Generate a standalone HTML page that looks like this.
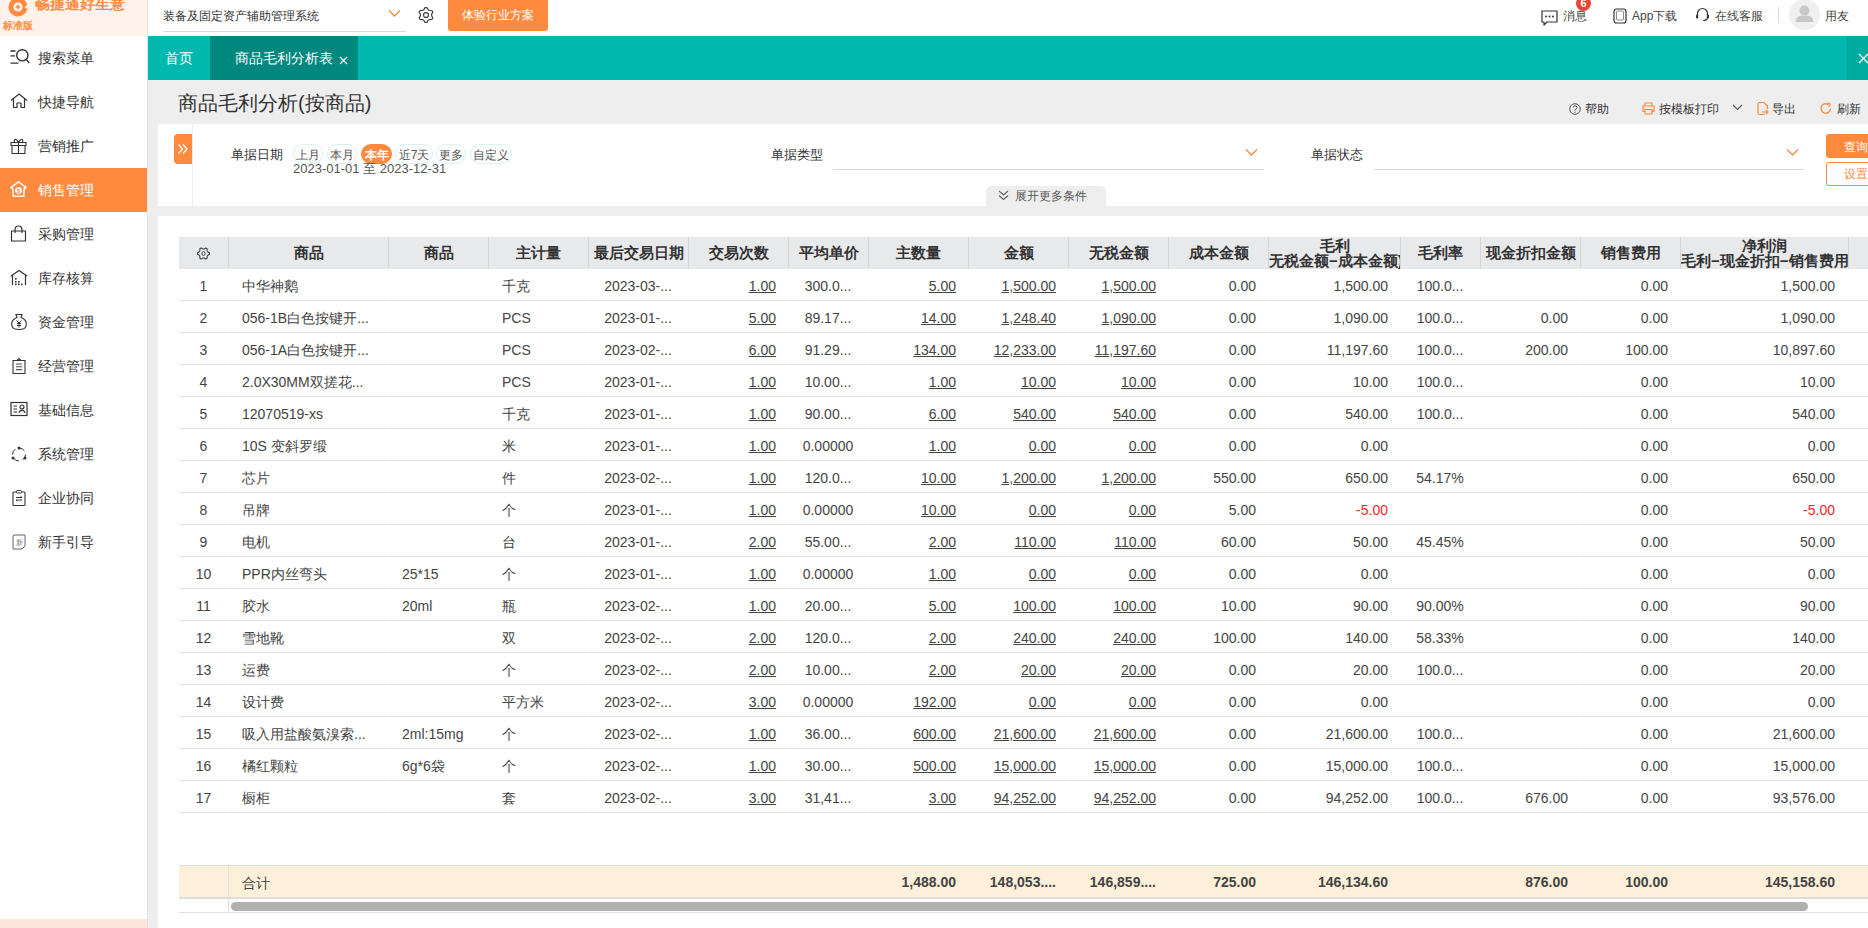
<!DOCTYPE html>
<html><head><meta charset="utf-8">
<style>
*{box-sizing:border-box;margin:0;padding:0}
html,body{width:1868px;height:928px;overflow:hidden;background:#eeeeee;font-family:"Liberation Sans",sans-serif;color:#333}
.abs{position:absolute}
#side{position:absolute;left:0;top:0;width:147px;height:928px;background:#fff;border-right:1px solid #e3e3e3;width:148px}
#logo{position:absolute;left:0;top:0;width:147px;height:36px;background:#fff2ea;overflow:hidden}
#logo .t1{position:absolute;left:35px;top:-1px;font-size:15px;font-weight:bold;color:#fd8a3e;line-height:16px;white-space:nowrap;transform:scaleY(0.8);transform-origin:0 0}
#logo .t2{position:absolute;left:3px;top:19px;font-size:10px;font-weight:bold;color:#fd8a3e;line-height:13px;white-space:nowrap}
.mi{position:absolute;left:0;width:147px;height:44px;font-size:14px;color:#333;line-height:44px}
.mi span{position:absolute;left:38px;top:0}
.mi svg{position:absolute;left:10px;top:13px}
.mi.act{background:#fd8a3e;color:#fff}
#sbot{position:absolute;left:0;top:919px;width:147px;height:9px;background:#fde7dc}
#top{position:absolute;left:148px;top:0;width:1720px;height:36px;background:#fff}
#tabs{position:absolute;left:148px;top:36px;width:1720px;height:44px;background:#01b8ae}
.tab{position:absolute;top:0;height:44px;line-height:44px;color:#fff;font-size:14px;white-space:nowrap}
#titlebar{position:absolute;left:148px;top:80px;width:1720px;height:44px;background:#eeeeee}
#filter{position:absolute;left:158px;top:124px;width:1710px;height:82px;background:#fff}
#tpanel{position:absolute;left:158px;top:216px;width:1710px;height:712px;background:#fff;overflow:hidden}
.th{position:absolute;height:32px;background:#e8e9eb;font-size:15px;font-weight:bold;color:#333;text-align:center;line-height:32px;white-space:nowrap;overflow:hidden;border-left:1px solid #d4d4d4}
.th.first{border-left:none}
.th.two{line-height:15px;padding-top:1px}
.th.two .l2{text-align:left}
.td{position:absolute;font-size:14px;color:#444;line-height:31px;white-space:nowrap;overflow:hidden;padding:0 12px 0 14px}
.td.c{text-align:center;padding:0}
.td.l{text-align:left}
.td.r{text-align:right}
.td.u span{text-decoration:underline;text-underline-offset:1px}
.td.red{color:#f5222d}
.td.b{font-weight:bold;line-height:33px}
.td.n{line-height:35px}
.rl{position:absolute;height:1px;background:#e2e2e2}
.foot{position:absolute;left:21px;width:1700px;height:34px;background:#fcf0da;border-top:1px solid #dedede;border-bottom:2px solid #dedede}
.vs{position:absolute;width:1px;background:#e0e0e0}
.chip{position:absolute;top:144px;height:20px;line-height:20px;font-size:12px;color:#555;border:1px solid #d9f1f1;border-radius:10px;text-align:center;white-space:nowrap}
.chip.on{background:#fd8a3e;border-color:#fd8a3e;color:#fff;font-weight:bold}
.lbl{position:absolute;font-size:13px;color:#333;line-height:20px;white-space:nowrap}
.uline{position:absolute;height:1px;background:#d9d9d9}
.tt{position:absolute;font-size:12px;color:#333;line-height:16px;white-space:nowrap}
</style></head><body>
<div id="side">
 <div id="logo">
  <svg class="abs" style="left:8px;top:-3px" width="20" height="20" viewBox="0 0 20 20"><path d="M10 0.5 A9.5 9.5 0 1 0 19.3 12 L16.5 10 L19.3 8 A9.5 9.5 0 0 0 10 0.5 Z" fill="#fd8a3e"/><circle cx="10" cy="10" r="4.6" fill="#fff2ea"/><path d="M10 7 L11 9 L13 10 L11 11 L10 13 L9 11 L7 10 L9 9 Z" fill="#fd8a3e"/></svg>
  <div class="t1">畅捷通好生意</div>
  <div class="t2">标准版</div>
 </div>
 <div class="mi" style="top:36px"><svg width="20" height="16" viewBox="0 0 20 16"><path d="M0.5 2H5.5M0.5 6.9H5M0.5 14.2H8.5" stroke="#333" stroke-width="1.3" fill="none"/><circle cx="12.3" cy="6.3" r="5.6" stroke="#333" stroke-width="1.4" fill="none"/><path d="M16.3 10.4 L19.3 14" stroke="#333" stroke-width="1.4"/></svg><span>搜索菜单</span></div>
 <div class="mi" style="top:80px"><svg width="18" height="16" viewBox="0 0 18 16"><path d="M1 7.5 L9 1 L17 7.5 M3.5 5.5 V14.5 H7 V10 H11 V14.5 H14.5 V5.5" stroke="#333" stroke-width="1.2" fill="none" stroke-linejoin="round"/></svg><span>快捷导航</span></div>
 <div class="mi" style="top:124px"><svg width="18" height="18" viewBox="0 0 18 18"><path d="M1 5.5 H16 V8.5 H1 Z M2 8.5 V16.5 H15 V8.5 M8.5 5.5 V16.5 M8.5 5.5 C6 1 3.5 1.5 4.5 5.5 M8.5 5.5 C11 1 13.5 1.5 12.5 5.5" stroke="#333" stroke-width="1.1" fill="none"/></svg><span>营销推广</span></div>
 <div class="mi act" style="top:168px"><svg width="18" height="18" viewBox="0 0 18 18"><path d="M8.5 0.9 L16.3 6.6 L14.2 7.3 L13.8 15.3 H3.2 L2.8 7.3 L0.7 6.6 Z" stroke="#fff" stroke-width="1.5" fill="none" stroke-linejoin="round"/><circle cx="8.5" cy="9.6" r="3.4" fill="#fff"/><text x="8.5" y="11.8" font-size="6" text-anchor="middle" fill="#fd8a3e" font-weight="bold" font-family="Liberation Sans">$</text></svg><span>销售管理</span></div>
 <div class="mi" style="top:212px"><svg width="18" height="18" viewBox="0 0 18 18"><path d="M1.5 6 H15.5 V16 H1.5 Z M5 8 V4.5 A3.5 3.5 0 0 1 12 4.5 V8" stroke="#333" stroke-width="1.2" fill="none"/></svg><span>采购管理</span></div>
 <div class="mi" style="top:256px"><svg width="18" height="18" viewBox="0 0 18 18"><path d="M1 7 L9 1.5 L17 7 M2.5 6 V16 M15.5 6 V16" stroke="#333" stroke-width="1.2" fill="none"/><g fill="#333"><rect x="5" y="9" width="1.6" height="1.6"/><rect x="5" y="12" width="1.6" height="1.6"/><rect x="8" y="12" width="1.6" height="1.6"/><rect x="5" y="14.5" width="1.6" height="1.6"/><rect x="8" y="14.5" width="1.6" height="1.6"/><rect x="11" y="14.5" width="1.6" height="1.6"/></g></svg><span>库存核算</span></div>
 <div class="mi" style="top:300px"><svg width="18" height="18" viewBox="0 0 18 18"><path d="M6 1.5 H12 L11 4.5 C15 6 17 9 16 13 C15.5 16 13 16.5 9 16.5 C5 16.5 2.5 16 2 13 C1 9 3 6 7 4.5 Z" stroke="#333" stroke-width="1.1" fill="none"/><path d="M6.5 7.5 L9 10 L11.5 7.5 M9 10 V14.5 M6.8 10.5 H11.2 M6.8 12.5 H11.2" stroke="#333" stroke-width="1" fill="none"/></svg><span>资金管理</span></div>
 <div class="mi" style="top:344px"><svg width="18" height="18" viewBox="0 0 18 18"><path d="M3 3.5 H15 V16.5 H3 Z" stroke="#333" stroke-width="1.1" fill="none" rx="1"/><path d="M7 3.5 L9 1.5 L11 3.5" stroke="#333" stroke-width="1.1" fill="none"/><path d="M6 7 H12 M6 9.8 H12 M6 12.6 H12" stroke="#555" stroke-width="1.1"/></svg><span>经营管理</span></div>
 <div class="mi" style="top:388px"><svg width="18" height="16" viewBox="0 0 18 16"><rect x="1" y="1.5" width="16" height="13" stroke="#333" stroke-width="1.2" fill="none"/><path d="M3.5 5 H7 M3.5 8 H7 M3.5 11 H7" stroke="#333" stroke-width="1.1"/><circle cx="12" cy="6" r="2" stroke="#333" stroke-width="1.1" fill="none"/><path d="M9 12 C9.5 8.5 14.5 8.5 15 12" stroke="#333" stroke-width="1.1" fill="none"/></svg><span>基础信息</span></div>
 <div class="mi" style="top:432px"><svg width="18" height="18" viewBox="0 0 18 18"><circle cx="9" cy="9.5" r="6.5" stroke="#333" stroke-width="1" fill="none" stroke-dasharray="6 4"/><circle cx="9" cy="3" r="1.5" fill="#333"/><circle cx="3" cy="13" r="1.5" fill="#333"/><circle cx="15" cy="13" r="1.5" fill="#333"/></svg><span>系统管理</span></div>
 <div class="mi" style="top:476px"><svg width="18" height="18" viewBox="0 0 18 18"><rect x="3" y="3" width="12" height="13.5" rx="1" stroke="#333" stroke-width="1.1" fill="none"/><rect x="6.5" y="1.5" width="5" height="2.5" rx="1" stroke="#333" stroke-width="1" fill="#fff"/><path d="M6 8.5 H12 L10.5 7.2 M12 11 H6 L7.5 12.3" stroke="#333" stroke-width="1" fill="none"/></svg><span>企业协同</span></div>
 <div class="mi" style="top:520px"><svg width="18" height="18" viewBox="0 0 18 18"><path d="M4 2 H15 V13 L12 16 H3 V3 Z" stroke="#666" stroke-width="1" fill="none"/><text x="9" y="12" font-size="7" text-anchor="middle" fill="#777">新</text></svg><span>新手引导</span></div>
 <div id="sbot"></div>
</div>

<div id="top">
 <div class="tt" style="left:15px;top:8px;font-size:12px">装备及固定资产辅助管理系统</div>
 <div class="uline" style="left:15px;top:31px;width:243px;background:#d9d9d9"></div>
 <svg class="abs" style="left:240px;top:9px" width="13" height="9" viewBox="0 0 13 9"><path d="M1 1.5 L6.5 7 L12 1.5" stroke="#fd8a3e" stroke-width="1.3" fill="none"/></svg>
 <svg class="abs" style="left:270px;top:7px" width="16" height="16" viewBox="0 0 13 13"><path d="M12.45 5.72 L12.45 7.28 L10.75 8.26 L10.15 9.30 L10.15 11.26 L8.80 12.04 L7.10 11.06 L5.90 11.06 L4.20 12.04 L2.85 11.26 L2.85 9.30 L2.25 8.26 L0.55 7.28 L0.55 5.72 L2.25 4.74 L2.85 3.70 L2.85 1.74 L4.20 0.96 L5.90 1.94 L7.10 1.94 L8.80 0.96 L10.15 1.74 L10.15 3.70 L10.75 4.74 Z" fill="none" stroke="#444" stroke-width="1" stroke-linejoin="round" transform="rotate(90 6.5 6.5)"/><circle cx="6.5" cy="6.5" r="2" fill="none" stroke="#444" stroke-width="1"/></svg>
 <div class="abs" style="left:300px;top:0;width:100px;height:31px;background:#fd8a3e;border-radius:0 0 3px 3px;color:#fff;font-size:12px;line-height:31px;text-align:center">体验行业方案</div>

 <svg class="abs" style="left:1393px;top:10px" width="17" height="16" viewBox="0 0 17 16"><path d="M1 1 H16 V12 H6 L3 15 V12 H1 Z" stroke="#333" stroke-width="1.2" fill="none" stroke-linejoin="round"/><circle cx="5" cy="6.5" r="1" fill="#333"/><circle cx="8.5" cy="6.5" r="1" fill="#333"/><circle cx="12" cy="6.5" r="1" fill="#333"/></svg>
 <div class="tt" style="left:1415px;top:8px;color:#444">消息</div>
 <div class="abs" style="left:1428px;top:-4px;width:15px;height:15px;border-radius:50%;background:#f04134;color:#fff;font-size:11px;font-weight:bold;text-align:center;line-height:15px">6</div>
 <svg class="abs" style="left:1465px;top:8px" width="14" height="16" viewBox="0 0 14 16"><rect x="1" y="1" width="12" height="14" rx="2.5" stroke="#333" stroke-width="1.2" fill="none"/><rect x="3.5" y="3" width="7" height="9" rx="1" stroke="#888" stroke-width="1" fill="none"/></svg>
 <div class="tt" style="left:1484px;top:8px;color:#444">App下载</div>
 <svg class="abs" style="left:1547px;top:7px" width="15" height="15" viewBox="0 0 15 15"><path d="M2.5 8 V6.5 A5 5 0 0 1 12.5 6.5 V8" stroke="#333" stroke-width="1.2" fill="none"/><rect x="1" y="7.5" width="2.2" height="4" rx="1" fill="#333"/><rect x="11.8" y="7.5" width="2.2" height="4" rx="1" fill="#333"/><path d="M12.5 11 C12 13 10 13.5 8 13.5" stroke="#333" stroke-width="1.1" fill="none"/></svg>
 <div class="tt" style="left:1567px;top:8px;color:#444">在线客服</div>
 <div class="abs" style="left:1630px;top:7px;width:1px;height:16px;background:#ddd"></div>
 <div class="abs" style="left:1641px;top:-1px;width:31px;height:31px;border-radius:50%;background:#efefef;overflow:hidden"><svg width="31" height="31" viewBox="0 0 31 31"><circle cx="15.5" cy="11.5" r="5" fill="#c8c8c8"/><path d="M6.5 23 C7 17.5 10 16.5 15.5 16.5 C21 16.5 24 17.5 24.5 23 Z" fill="#c8c8c8"/></svg></div>
 <div class="tt" style="left:1677px;top:8px;color:#444">用友</div>
</div>

<div id="tabs">
 <div class="tab" style="left:17px">首页</div>
 <div class="abs" style="left:62px;top:0;width:148px;height:44px;background:#00877e"></div>
 <div class="tab" style="left:87px">商品毛利分析表</div>
 <svg class="abs" style="left:191px;top:20px" width="9" height="9" viewBox="0 0 9 9"><path d="M1 1 L8 8 M8 1 L1 8" stroke="#fff" stroke-width="1.2"/></svg>
 <div class="abs" style="left:1699px;top:0;width:21px;height:44px;background:#00aca0;border-left:1px solid #009d92"></div>
 <svg class="abs" style="left:1710px;top:17px" width="11" height="11" viewBox="0 0 11 11"><path d="M1 1 L10 10 M10 1 L1 10" stroke="#fff" stroke-width="1.3"/></svg>
</div>

<div id="titlebar">
 <div class="abs" style="left:30px;top:12px;font-size:20px;line-height:22px;color:#333;white-space:nowrap">商品毛利分析(按商品)</div>
 <svg class="abs" style="left:1421px;top:23px" width="12" height="12" viewBox="0 0 12 12"><circle cx="6" cy="6" r="5.3" stroke="#555" stroke-width="1" fill="none"/><path d="M4.3 4.6 A1.8 1.8 0 1 1 6.5 6.3 C6 6.5 6 7 6 7.6" stroke="#555" stroke-width="1" fill="none"/><circle cx="6" cy="9.2" r="0.6" fill="#555"/></svg>
 <div class="tt" style="left:1437px;top:21px">帮助</div>
 <svg class="abs" style="left:1494px;top:22px" width="13" height="13" viewBox="0 0 13 13"><path d="M3 4 V1 H10 V4 M3 9.5 H1 V4 H12 V9.5 H10 M3 7.5 H10 V12 H3 Z" stroke="#fd8a3e" stroke-width="1.2" fill="none"/></svg>
 <div class="tt" style="left:1511px;top:21px">按模板打印</div>
 <svg class="abs" style="left:1584px;top:24px" width="11" height="7" viewBox="0 0 11 7"><path d="M1 1 L5.5 5.5 L10 1" stroke="#555" stroke-width="1.1" fill="none"/></svg>
 <svg class="abs" style="left:1609px;top:21px" width="12" height="15" viewBox="0 0 12 15"><path d="M8 13.5 H2.5 A1.5 1.5 0 0 1 1 12 V3 A1.5 1.5 0 0 1 2.5 1.5 H7 L10.5 5 V8" stroke="#fd8a3e" stroke-width="1.2" fill="none"/><path d="M5 11 H11 M9 9 L11 11 L9 13" stroke="#fd8a3e" stroke-width="1.1" fill="none"/></svg>
 <div class="tt" style="left:1624px;top:21px">导出</div>
 <svg class="abs" style="left:1672px;top:22px" width="12" height="13" viewBox="0 0 12 13"><path d="M10.5 6.5 A4.7 4.7 0 1 1 8.5 2.6" stroke="#fd8a3e" stroke-width="1.3" fill="none"/><path d="M7 0.8 L10.2 2 L8.8 5" stroke="#fd8a3e" stroke-width="1.2" fill="none"/></svg>
 <div class="tt" style="left:1689px;top:21px">刷新</div>
</div>

<div id="filter">
 <div class="abs" style="left:34px;top:0;width:1px;height:82px;background:#eeeeee"></div>
 <div class="abs" style="left:16px;top:10px;width:18px;height:30px;background:#fd8a3e;border-radius:4px 0 0 4px"></div>
 <svg class="abs" style="left:19px;top:19px" width="12" height="12" viewBox="0 0 12 12"><path d="M1.5 1.5 L5.5 6 L1.5 10.5 M6 1.5 L10 6 L6 10.5" stroke="#fff" stroke-width="1.3" fill="none"/></svg>
 <div class="lbl" style="left:73px;top:21px">单据日期</div>
</div>
<div class="chip" style="left:293px;width:30px">上月</div>
<div class="chip" style="left:327px;width:30px">本月</div>
<div class="chip on" style="left:361px;width:31px">本年</div>
<div class="chip" style="left:395px;width:38px">近7天</div>
<div class="chip" style="left:436px;width:30px">更多</div>
<div class="chip" style="left:470px;width:42px">自定义</div>
<div class="abs" style="left:293px;top:161px;font-size:13px;line-height:16px;color:#555;white-space:nowrap">2023-01-01 至 2023-12-31</div>
<div class="lbl" style="left:771px;top:145px">单据类型</div>
<div class="uline" style="left:833px;top:169px;width:431px"></div>
<svg class="abs" style="left:1245px;top:148px" width="13" height="9" viewBox="0 0 13 9"><path d="M1 1.5 L6.5 7 L12 1.5" stroke="#fd8a3e" stroke-width="1.3" fill="none"/></svg>
<div class="lbl" style="left:1311px;top:145px">单据状态</div>
<div class="uline" style="left:1374px;top:169px;width:430px"></div>
<svg class="abs" style="left:1786px;top:148px" width="13" height="9" viewBox="0 0 13 9"><path d="M1 1.5 L6.5 7 L12 1.5" stroke="#fd8a3e" stroke-width="1.3" fill="none"/></svg>
<div class="abs" style="left:1826px;top:134px;width:60px;height:24px;background:#fd8a3e;border-radius:3px;color:#fff;font-size:12px;line-height:26px;padding-left:18px">查询</div>
<div class="abs" style="left:1826px;top:162px;width:60px;height:24px;background:#fff;border:1px solid #fd8a3e;border-radius:3px;color:#fd8a3e;font-size:12px;line-height:22px;padding-left:17px">设置</div>
<div class="abs" style="left:986px;top:186px;width:120px;height:20px;background:#eeeeee;border-radius:5px 5px 0 0"></div>
<svg class="abs" style="left:998px;top:190px" width="11" height="11" viewBox="0 0 11 11"><path d="M1 1 L5.5 5 L10 1 M1 5.5 L5.5 9.5 L10 5.5" stroke="#666" stroke-width="1.1" fill="none"/></svg>
<div class="abs" style="left:1015px;top:188px;font-size:12px;line-height:16px;color:#555;white-space:nowrap">展开更多条件</div>

<div id="tpanel">
<div class="th first" style="left:21px;top:21px;width:49px"><svg width="13" height="13" viewBox="0 0 13 13" style="position:absolute;left:18px;top:10px"><path d="M12.45 5.72 L12.45 7.28 L10.75 8.26 L10.15 9.30 L10.15 11.26 L8.80 12.04 L7.10 11.06 L5.90 11.06 L4.20 12.04 L2.85 11.26 L2.85 9.30 L2.25 8.26 L0.55 7.28 L0.55 5.72 L2.25 4.74 L2.85 3.70 L2.85 1.74 L4.20 0.96 L5.90 1.94 L7.10 1.94 L8.80 0.96 L10.15 1.74 L10.15 3.70 L10.75 4.74 Z" fill="none" stroke="#444" stroke-width="1.1" stroke-linejoin="round"/><ellipse cx="6.5" cy="6.5" rx="1.6" ry="2" fill="none" stroke="#444" stroke-width="1"/></svg></div>
<div class="th" style="left:70px;top:21px;width:160px"><span>商品</span></div>
<div class="th" style="left:230px;top:21px;width:100px"><span>商品</span></div>
<div class="th" style="left:330px;top:21px;width:100px"><span>主计量</span></div>
<div class="th" style="left:430px;top:21px;width:100px"><span>最后交易日期</span></div>
<div class="th" style="left:530px;top:21px;width:100px"><span>交易次数</span></div>
<div class="th" style="left:630px;top:21px;width:80px"><span>平均单价</span></div>
<div class="th" style="left:710px;top:21px;width:100px"><span>主数量</span></div>
<div class="th" style="left:810px;top:21px;width:100px"><span>金额</span></div>
<div class="th" style="left:910px;top:21px;width:100px"><span>无税金额</span></div>
<div class="th" style="left:1010px;top:21px;width:100px"><span>成本金额</span></div>
<div class="th two" style="left:1110px;top:21px;width:132px"><div>毛利</div><div class="l2">无税金额−成本金额)</div></div>
<div class="th" style="left:1242px;top:21px;width:80px"><span>毛利率</span></div>
<div class="th" style="left:1322px;top:21px;width:100px"><span>现金折扣金额</span></div>
<div class="th" style="left:1422px;top:21px;width:100px"><span>销售费用</span></div>
<div class="th two" style="left:1522px;top:21px;width:168px"><div>净利润</div><div class="l2">毛利−现金折扣−销售费用</div></div>
<div class="th" style="left:1690px;top:21px;width:40px"><span></span></div>
<div class="td c " style="left:21px;top:55px;width:49px;height:29px"><span>1</span></div>
<div class="td l " style="left:70px;top:55px;width:160px;height:29px"><span>中华神鹅</span></div>
<div class="td l " style="left:230px;top:55px;width:100px;height:29px"><span></span></div>
<div class="td l " style="left:330px;top:55px;width:100px;height:29px"><span>千克</span></div>
<div class="td c " style="left:430px;top:55px;width:100px;height:29px"><span>2023-03-...</span></div>
<div class="td r u " style="left:530px;top:55px;width:100px;height:29px"><span>1.00</span></div>
<div class="td c " style="left:630px;top:55px;width:80px;height:29px"><span>300.0...</span></div>
<div class="td r u " style="left:710px;top:55px;width:100px;height:29px"><span>5.00</span></div>
<div class="td r u " style="left:810px;top:55px;width:100px;height:29px"><span>1,500.00</span></div>
<div class="td r u " style="left:910px;top:55px;width:100px;height:29px"><span>1,500.00</span></div>
<div class="td r " style="left:1010px;top:55px;width:100px;height:29px"><span>0.00</span></div>
<div class="td r " style="left:1110px;top:55px;width:132px;height:29px"><span>1,500.00</span></div>
<div class="td c " style="left:1242px;top:55px;width:80px;height:29px"><span>100.0...</span></div>
<div class="td r " style="left:1322px;top:55px;width:100px;height:29px"><span></span></div>
<div class="td r " style="left:1422px;top:55px;width:100px;height:29px"><span>0.00</span></div>
<div class="td r " style="left:1522px;top:55px;width:168px;height:29px;padding-right:13px"><span>1,500.00</span></div>
<div class="td l " style="left:1690px;top:55px;width:40px;height:29px"><span></span></div>
<div class="rl" style="top:84px;left:22px;width:1700px;background:#efefef"></div>
<div class="rl" style="top:84px;left:23px;width:47px"></div>
<div class="rl" style="top:84px;left:72px;width:158px"></div>
<div class="rl" style="top:84px;left:232px;width:98px"></div>
<div class="rl" style="top:84px;left:332px;width:98px"></div>
<div class="rl" style="top:84px;left:432px;width:98px"></div>
<div class="rl" style="top:84px;left:532px;width:98px"></div>
<div class="rl" style="top:84px;left:632px;width:78px"></div>
<div class="rl" style="top:84px;left:712px;width:98px"></div>
<div class="rl" style="top:84px;left:812px;width:98px"></div>
<div class="rl" style="top:84px;left:912px;width:98px"></div>
<div class="rl" style="top:84px;left:1012px;width:98px"></div>
<div class="rl" style="top:84px;left:1112px;width:130px"></div>
<div class="rl" style="top:84px;left:1244px;width:78px"></div>
<div class="rl" style="top:84px;left:1324px;width:98px"></div>
<div class="rl" style="top:84px;left:1424px;width:98px"></div>
<div class="rl" style="top:84px;left:1524px;width:166px"></div>
<div class="rl" style="top:84px;left:1692px;width:38px"></div>
<div class="td c " style="left:21px;top:87px;width:49px;height:29px"><span>2</span></div>
<div class="td l " style="left:70px;top:87px;width:160px;height:29px"><span>056-1B白色按键开...</span></div>
<div class="td l " style="left:230px;top:87px;width:100px;height:29px"><span></span></div>
<div class="td l " style="left:330px;top:87px;width:100px;height:29px"><span>PCS</span></div>
<div class="td c " style="left:430px;top:87px;width:100px;height:29px"><span>2023-01-...</span></div>
<div class="td r u " style="left:530px;top:87px;width:100px;height:29px"><span>5.00</span></div>
<div class="td c " style="left:630px;top:87px;width:80px;height:29px"><span>89.17...</span></div>
<div class="td r u " style="left:710px;top:87px;width:100px;height:29px"><span>14.00</span></div>
<div class="td r u " style="left:810px;top:87px;width:100px;height:29px"><span>1,248.40</span></div>
<div class="td r u " style="left:910px;top:87px;width:100px;height:29px"><span>1,090.00</span></div>
<div class="td r " style="left:1010px;top:87px;width:100px;height:29px"><span>0.00</span></div>
<div class="td r " style="left:1110px;top:87px;width:132px;height:29px"><span>1,090.00</span></div>
<div class="td c " style="left:1242px;top:87px;width:80px;height:29px"><span>100.0...</span></div>
<div class="td r " style="left:1322px;top:87px;width:100px;height:29px"><span>0.00</span></div>
<div class="td r " style="left:1422px;top:87px;width:100px;height:29px"><span>0.00</span></div>
<div class="td r " style="left:1522px;top:87px;width:168px;height:29px;padding-right:13px"><span>1,090.00</span></div>
<div class="td l " style="left:1690px;top:87px;width:40px;height:29px"><span></span></div>
<div class="rl" style="top:116px;left:22px;width:1700px;background:#efefef"></div>
<div class="rl" style="top:116px;left:23px;width:47px"></div>
<div class="rl" style="top:116px;left:72px;width:158px"></div>
<div class="rl" style="top:116px;left:232px;width:98px"></div>
<div class="rl" style="top:116px;left:332px;width:98px"></div>
<div class="rl" style="top:116px;left:432px;width:98px"></div>
<div class="rl" style="top:116px;left:532px;width:98px"></div>
<div class="rl" style="top:116px;left:632px;width:78px"></div>
<div class="rl" style="top:116px;left:712px;width:98px"></div>
<div class="rl" style="top:116px;left:812px;width:98px"></div>
<div class="rl" style="top:116px;left:912px;width:98px"></div>
<div class="rl" style="top:116px;left:1012px;width:98px"></div>
<div class="rl" style="top:116px;left:1112px;width:130px"></div>
<div class="rl" style="top:116px;left:1244px;width:78px"></div>
<div class="rl" style="top:116px;left:1324px;width:98px"></div>
<div class="rl" style="top:116px;left:1424px;width:98px"></div>
<div class="rl" style="top:116px;left:1524px;width:166px"></div>
<div class="rl" style="top:116px;left:1692px;width:38px"></div>
<div class="td c " style="left:21px;top:119px;width:49px;height:29px"><span>3</span></div>
<div class="td l " style="left:70px;top:119px;width:160px;height:29px"><span>056-1A白色按键开...</span></div>
<div class="td l " style="left:230px;top:119px;width:100px;height:29px"><span></span></div>
<div class="td l " style="left:330px;top:119px;width:100px;height:29px"><span>PCS</span></div>
<div class="td c " style="left:430px;top:119px;width:100px;height:29px"><span>2023-02-...</span></div>
<div class="td r u " style="left:530px;top:119px;width:100px;height:29px"><span>6.00</span></div>
<div class="td c " style="left:630px;top:119px;width:80px;height:29px"><span>91.29...</span></div>
<div class="td r u " style="left:710px;top:119px;width:100px;height:29px"><span>134.00</span></div>
<div class="td r u " style="left:810px;top:119px;width:100px;height:29px"><span>12,233.00</span></div>
<div class="td r u " style="left:910px;top:119px;width:100px;height:29px"><span>11,197.60</span></div>
<div class="td r " style="left:1010px;top:119px;width:100px;height:29px"><span>0.00</span></div>
<div class="td r " style="left:1110px;top:119px;width:132px;height:29px"><span>11,197.60</span></div>
<div class="td c " style="left:1242px;top:119px;width:80px;height:29px"><span>100.0...</span></div>
<div class="td r " style="left:1322px;top:119px;width:100px;height:29px"><span>200.00</span></div>
<div class="td r " style="left:1422px;top:119px;width:100px;height:29px"><span>100.00</span></div>
<div class="td r " style="left:1522px;top:119px;width:168px;height:29px;padding-right:13px"><span>10,897.60</span></div>
<div class="td l " style="left:1690px;top:119px;width:40px;height:29px"><span></span></div>
<div class="rl" style="top:148px;left:22px;width:1700px;background:#efefef"></div>
<div class="rl" style="top:148px;left:23px;width:47px"></div>
<div class="rl" style="top:148px;left:72px;width:158px"></div>
<div class="rl" style="top:148px;left:232px;width:98px"></div>
<div class="rl" style="top:148px;left:332px;width:98px"></div>
<div class="rl" style="top:148px;left:432px;width:98px"></div>
<div class="rl" style="top:148px;left:532px;width:98px"></div>
<div class="rl" style="top:148px;left:632px;width:78px"></div>
<div class="rl" style="top:148px;left:712px;width:98px"></div>
<div class="rl" style="top:148px;left:812px;width:98px"></div>
<div class="rl" style="top:148px;left:912px;width:98px"></div>
<div class="rl" style="top:148px;left:1012px;width:98px"></div>
<div class="rl" style="top:148px;left:1112px;width:130px"></div>
<div class="rl" style="top:148px;left:1244px;width:78px"></div>
<div class="rl" style="top:148px;left:1324px;width:98px"></div>
<div class="rl" style="top:148px;left:1424px;width:98px"></div>
<div class="rl" style="top:148px;left:1524px;width:166px"></div>
<div class="rl" style="top:148px;left:1692px;width:38px"></div>
<div class="td c " style="left:21px;top:151px;width:49px;height:29px"><span>4</span></div>
<div class="td l " style="left:70px;top:151px;width:160px;height:29px"><span>2.0X30MM双搓花...</span></div>
<div class="td l " style="left:230px;top:151px;width:100px;height:29px"><span></span></div>
<div class="td l " style="left:330px;top:151px;width:100px;height:29px"><span>PCS</span></div>
<div class="td c " style="left:430px;top:151px;width:100px;height:29px"><span>2023-01-...</span></div>
<div class="td r u " style="left:530px;top:151px;width:100px;height:29px"><span>1.00</span></div>
<div class="td c " style="left:630px;top:151px;width:80px;height:29px"><span>10.00...</span></div>
<div class="td r u " style="left:710px;top:151px;width:100px;height:29px"><span>1.00</span></div>
<div class="td r u " style="left:810px;top:151px;width:100px;height:29px"><span>10.00</span></div>
<div class="td r u " style="left:910px;top:151px;width:100px;height:29px"><span>10.00</span></div>
<div class="td r " style="left:1010px;top:151px;width:100px;height:29px"><span>0.00</span></div>
<div class="td r " style="left:1110px;top:151px;width:132px;height:29px"><span>10.00</span></div>
<div class="td c " style="left:1242px;top:151px;width:80px;height:29px"><span>100.0...</span></div>
<div class="td r " style="left:1322px;top:151px;width:100px;height:29px"><span></span></div>
<div class="td r " style="left:1422px;top:151px;width:100px;height:29px"><span>0.00</span></div>
<div class="td r " style="left:1522px;top:151px;width:168px;height:29px;padding-right:13px"><span>10.00</span></div>
<div class="td l " style="left:1690px;top:151px;width:40px;height:29px"><span></span></div>
<div class="rl" style="top:180px;left:22px;width:1700px;background:#efefef"></div>
<div class="rl" style="top:180px;left:23px;width:47px"></div>
<div class="rl" style="top:180px;left:72px;width:158px"></div>
<div class="rl" style="top:180px;left:232px;width:98px"></div>
<div class="rl" style="top:180px;left:332px;width:98px"></div>
<div class="rl" style="top:180px;left:432px;width:98px"></div>
<div class="rl" style="top:180px;left:532px;width:98px"></div>
<div class="rl" style="top:180px;left:632px;width:78px"></div>
<div class="rl" style="top:180px;left:712px;width:98px"></div>
<div class="rl" style="top:180px;left:812px;width:98px"></div>
<div class="rl" style="top:180px;left:912px;width:98px"></div>
<div class="rl" style="top:180px;left:1012px;width:98px"></div>
<div class="rl" style="top:180px;left:1112px;width:130px"></div>
<div class="rl" style="top:180px;left:1244px;width:78px"></div>
<div class="rl" style="top:180px;left:1324px;width:98px"></div>
<div class="rl" style="top:180px;left:1424px;width:98px"></div>
<div class="rl" style="top:180px;left:1524px;width:166px"></div>
<div class="rl" style="top:180px;left:1692px;width:38px"></div>
<div class="td c " style="left:21px;top:183px;width:49px;height:29px"><span>5</span></div>
<div class="td l " style="left:70px;top:183px;width:160px;height:29px"><span>12070519-xs</span></div>
<div class="td l " style="left:230px;top:183px;width:100px;height:29px"><span></span></div>
<div class="td l " style="left:330px;top:183px;width:100px;height:29px"><span>千克</span></div>
<div class="td c " style="left:430px;top:183px;width:100px;height:29px"><span>2023-01-...</span></div>
<div class="td r u " style="left:530px;top:183px;width:100px;height:29px"><span>1.00</span></div>
<div class="td c " style="left:630px;top:183px;width:80px;height:29px"><span>90.00...</span></div>
<div class="td r u " style="left:710px;top:183px;width:100px;height:29px"><span>6.00</span></div>
<div class="td r u " style="left:810px;top:183px;width:100px;height:29px"><span>540.00</span></div>
<div class="td r u " style="left:910px;top:183px;width:100px;height:29px"><span>540.00</span></div>
<div class="td r " style="left:1010px;top:183px;width:100px;height:29px"><span>0.00</span></div>
<div class="td r " style="left:1110px;top:183px;width:132px;height:29px"><span>540.00</span></div>
<div class="td c " style="left:1242px;top:183px;width:80px;height:29px"><span>100.0...</span></div>
<div class="td r " style="left:1322px;top:183px;width:100px;height:29px"><span></span></div>
<div class="td r " style="left:1422px;top:183px;width:100px;height:29px"><span>0.00</span></div>
<div class="td r " style="left:1522px;top:183px;width:168px;height:29px;padding-right:13px"><span>540.00</span></div>
<div class="td l " style="left:1690px;top:183px;width:40px;height:29px"><span></span></div>
<div class="rl" style="top:212px;left:22px;width:1700px;background:#efefef"></div>
<div class="rl" style="top:212px;left:23px;width:47px"></div>
<div class="rl" style="top:212px;left:72px;width:158px"></div>
<div class="rl" style="top:212px;left:232px;width:98px"></div>
<div class="rl" style="top:212px;left:332px;width:98px"></div>
<div class="rl" style="top:212px;left:432px;width:98px"></div>
<div class="rl" style="top:212px;left:532px;width:98px"></div>
<div class="rl" style="top:212px;left:632px;width:78px"></div>
<div class="rl" style="top:212px;left:712px;width:98px"></div>
<div class="rl" style="top:212px;left:812px;width:98px"></div>
<div class="rl" style="top:212px;left:912px;width:98px"></div>
<div class="rl" style="top:212px;left:1012px;width:98px"></div>
<div class="rl" style="top:212px;left:1112px;width:130px"></div>
<div class="rl" style="top:212px;left:1244px;width:78px"></div>
<div class="rl" style="top:212px;left:1324px;width:98px"></div>
<div class="rl" style="top:212px;left:1424px;width:98px"></div>
<div class="rl" style="top:212px;left:1524px;width:166px"></div>
<div class="rl" style="top:212px;left:1692px;width:38px"></div>
<div class="td c " style="left:21px;top:215px;width:49px;height:29px"><span>6</span></div>
<div class="td l " style="left:70px;top:215px;width:160px;height:29px"><span>10S 变斜罗缎</span></div>
<div class="td l " style="left:230px;top:215px;width:100px;height:29px"><span></span></div>
<div class="td l " style="left:330px;top:215px;width:100px;height:29px"><span>米</span></div>
<div class="td c " style="left:430px;top:215px;width:100px;height:29px"><span>2023-01-...</span></div>
<div class="td r u " style="left:530px;top:215px;width:100px;height:29px"><span>1.00</span></div>
<div class="td c " style="left:630px;top:215px;width:80px;height:29px"><span>0.00000</span></div>
<div class="td r u " style="left:710px;top:215px;width:100px;height:29px"><span>1.00</span></div>
<div class="td r u " style="left:810px;top:215px;width:100px;height:29px"><span>0.00</span></div>
<div class="td r u " style="left:910px;top:215px;width:100px;height:29px"><span>0.00</span></div>
<div class="td r " style="left:1010px;top:215px;width:100px;height:29px"><span>0.00</span></div>
<div class="td r " style="left:1110px;top:215px;width:132px;height:29px"><span>0.00</span></div>
<div class="td c " style="left:1242px;top:215px;width:80px;height:29px"><span></span></div>
<div class="td r " style="left:1322px;top:215px;width:100px;height:29px"><span></span></div>
<div class="td r " style="left:1422px;top:215px;width:100px;height:29px"><span>0.00</span></div>
<div class="td r " style="left:1522px;top:215px;width:168px;height:29px;padding-right:13px"><span>0.00</span></div>
<div class="td l " style="left:1690px;top:215px;width:40px;height:29px"><span></span></div>
<div class="rl" style="top:244px;left:22px;width:1700px;background:#efefef"></div>
<div class="rl" style="top:244px;left:23px;width:47px"></div>
<div class="rl" style="top:244px;left:72px;width:158px"></div>
<div class="rl" style="top:244px;left:232px;width:98px"></div>
<div class="rl" style="top:244px;left:332px;width:98px"></div>
<div class="rl" style="top:244px;left:432px;width:98px"></div>
<div class="rl" style="top:244px;left:532px;width:98px"></div>
<div class="rl" style="top:244px;left:632px;width:78px"></div>
<div class="rl" style="top:244px;left:712px;width:98px"></div>
<div class="rl" style="top:244px;left:812px;width:98px"></div>
<div class="rl" style="top:244px;left:912px;width:98px"></div>
<div class="rl" style="top:244px;left:1012px;width:98px"></div>
<div class="rl" style="top:244px;left:1112px;width:130px"></div>
<div class="rl" style="top:244px;left:1244px;width:78px"></div>
<div class="rl" style="top:244px;left:1324px;width:98px"></div>
<div class="rl" style="top:244px;left:1424px;width:98px"></div>
<div class="rl" style="top:244px;left:1524px;width:166px"></div>
<div class="rl" style="top:244px;left:1692px;width:38px"></div>
<div class="td c " style="left:21px;top:247px;width:49px;height:29px"><span>7</span></div>
<div class="td l " style="left:70px;top:247px;width:160px;height:29px"><span>芯片</span></div>
<div class="td l " style="left:230px;top:247px;width:100px;height:29px"><span></span></div>
<div class="td l " style="left:330px;top:247px;width:100px;height:29px"><span>件</span></div>
<div class="td c " style="left:430px;top:247px;width:100px;height:29px"><span>2023-02-...</span></div>
<div class="td r u " style="left:530px;top:247px;width:100px;height:29px"><span>1.00</span></div>
<div class="td c " style="left:630px;top:247px;width:80px;height:29px"><span>120.0...</span></div>
<div class="td r u " style="left:710px;top:247px;width:100px;height:29px"><span>10.00</span></div>
<div class="td r u " style="left:810px;top:247px;width:100px;height:29px"><span>1,200.00</span></div>
<div class="td r u " style="left:910px;top:247px;width:100px;height:29px"><span>1,200.00</span></div>
<div class="td r " style="left:1010px;top:247px;width:100px;height:29px"><span>550.00</span></div>
<div class="td r " style="left:1110px;top:247px;width:132px;height:29px"><span>650.00</span></div>
<div class="td c " style="left:1242px;top:247px;width:80px;height:29px"><span>54.17%</span></div>
<div class="td r " style="left:1322px;top:247px;width:100px;height:29px"><span></span></div>
<div class="td r " style="left:1422px;top:247px;width:100px;height:29px"><span>0.00</span></div>
<div class="td r " style="left:1522px;top:247px;width:168px;height:29px;padding-right:13px"><span>650.00</span></div>
<div class="td l " style="left:1690px;top:247px;width:40px;height:29px"><span></span></div>
<div class="rl" style="top:276px;left:22px;width:1700px;background:#efefef"></div>
<div class="rl" style="top:276px;left:23px;width:47px"></div>
<div class="rl" style="top:276px;left:72px;width:158px"></div>
<div class="rl" style="top:276px;left:232px;width:98px"></div>
<div class="rl" style="top:276px;left:332px;width:98px"></div>
<div class="rl" style="top:276px;left:432px;width:98px"></div>
<div class="rl" style="top:276px;left:532px;width:98px"></div>
<div class="rl" style="top:276px;left:632px;width:78px"></div>
<div class="rl" style="top:276px;left:712px;width:98px"></div>
<div class="rl" style="top:276px;left:812px;width:98px"></div>
<div class="rl" style="top:276px;left:912px;width:98px"></div>
<div class="rl" style="top:276px;left:1012px;width:98px"></div>
<div class="rl" style="top:276px;left:1112px;width:130px"></div>
<div class="rl" style="top:276px;left:1244px;width:78px"></div>
<div class="rl" style="top:276px;left:1324px;width:98px"></div>
<div class="rl" style="top:276px;left:1424px;width:98px"></div>
<div class="rl" style="top:276px;left:1524px;width:166px"></div>
<div class="rl" style="top:276px;left:1692px;width:38px"></div>
<div class="td c " style="left:21px;top:279px;width:49px;height:29px"><span>8</span></div>
<div class="td l " style="left:70px;top:279px;width:160px;height:29px"><span>吊牌</span></div>
<div class="td l " style="left:230px;top:279px;width:100px;height:29px"><span></span></div>
<div class="td l " style="left:330px;top:279px;width:100px;height:29px"><span>个</span></div>
<div class="td c " style="left:430px;top:279px;width:100px;height:29px"><span>2023-01-...</span></div>
<div class="td r u " style="left:530px;top:279px;width:100px;height:29px"><span>1.00</span></div>
<div class="td c " style="left:630px;top:279px;width:80px;height:29px"><span>0.00000</span></div>
<div class="td r u " style="left:710px;top:279px;width:100px;height:29px"><span>10.00</span></div>
<div class="td r u " style="left:810px;top:279px;width:100px;height:29px"><span>0.00</span></div>
<div class="td r u " style="left:910px;top:279px;width:100px;height:29px"><span>0.00</span></div>
<div class="td r " style="left:1010px;top:279px;width:100px;height:29px"><span>5.00</span></div>
<div class="td r red " style="left:1110px;top:279px;width:132px;height:29px"><span>-5.00</span></div>
<div class="td c " style="left:1242px;top:279px;width:80px;height:29px"><span></span></div>
<div class="td r " style="left:1322px;top:279px;width:100px;height:29px"><span></span></div>
<div class="td r " style="left:1422px;top:279px;width:100px;height:29px"><span>0.00</span></div>
<div class="td r red " style="left:1522px;top:279px;width:168px;height:29px;padding-right:13px"><span>-5.00</span></div>
<div class="td l " style="left:1690px;top:279px;width:40px;height:29px"><span></span></div>
<div class="rl" style="top:308px;left:22px;width:1700px;background:#efefef"></div>
<div class="rl" style="top:308px;left:23px;width:47px"></div>
<div class="rl" style="top:308px;left:72px;width:158px"></div>
<div class="rl" style="top:308px;left:232px;width:98px"></div>
<div class="rl" style="top:308px;left:332px;width:98px"></div>
<div class="rl" style="top:308px;left:432px;width:98px"></div>
<div class="rl" style="top:308px;left:532px;width:98px"></div>
<div class="rl" style="top:308px;left:632px;width:78px"></div>
<div class="rl" style="top:308px;left:712px;width:98px"></div>
<div class="rl" style="top:308px;left:812px;width:98px"></div>
<div class="rl" style="top:308px;left:912px;width:98px"></div>
<div class="rl" style="top:308px;left:1012px;width:98px"></div>
<div class="rl" style="top:308px;left:1112px;width:130px"></div>
<div class="rl" style="top:308px;left:1244px;width:78px"></div>
<div class="rl" style="top:308px;left:1324px;width:98px"></div>
<div class="rl" style="top:308px;left:1424px;width:98px"></div>
<div class="rl" style="top:308px;left:1524px;width:166px"></div>
<div class="rl" style="top:308px;left:1692px;width:38px"></div>
<div class="td c " style="left:21px;top:311px;width:49px;height:29px"><span>9</span></div>
<div class="td l " style="left:70px;top:311px;width:160px;height:29px"><span>电机</span></div>
<div class="td l " style="left:230px;top:311px;width:100px;height:29px"><span></span></div>
<div class="td l " style="left:330px;top:311px;width:100px;height:29px"><span>台</span></div>
<div class="td c " style="left:430px;top:311px;width:100px;height:29px"><span>2023-01-...</span></div>
<div class="td r u " style="left:530px;top:311px;width:100px;height:29px"><span>2.00</span></div>
<div class="td c " style="left:630px;top:311px;width:80px;height:29px"><span>55.00...</span></div>
<div class="td r u " style="left:710px;top:311px;width:100px;height:29px"><span>2.00</span></div>
<div class="td r u " style="left:810px;top:311px;width:100px;height:29px"><span>110.00</span></div>
<div class="td r u " style="left:910px;top:311px;width:100px;height:29px"><span>110.00</span></div>
<div class="td r " style="left:1010px;top:311px;width:100px;height:29px"><span>60.00</span></div>
<div class="td r " style="left:1110px;top:311px;width:132px;height:29px"><span>50.00</span></div>
<div class="td c " style="left:1242px;top:311px;width:80px;height:29px"><span>45.45%</span></div>
<div class="td r " style="left:1322px;top:311px;width:100px;height:29px"><span></span></div>
<div class="td r " style="left:1422px;top:311px;width:100px;height:29px"><span>0.00</span></div>
<div class="td r " style="left:1522px;top:311px;width:168px;height:29px;padding-right:13px"><span>50.00</span></div>
<div class="td l " style="left:1690px;top:311px;width:40px;height:29px"><span></span></div>
<div class="rl" style="top:340px;left:22px;width:1700px;background:#efefef"></div>
<div class="rl" style="top:340px;left:23px;width:47px"></div>
<div class="rl" style="top:340px;left:72px;width:158px"></div>
<div class="rl" style="top:340px;left:232px;width:98px"></div>
<div class="rl" style="top:340px;left:332px;width:98px"></div>
<div class="rl" style="top:340px;left:432px;width:98px"></div>
<div class="rl" style="top:340px;left:532px;width:98px"></div>
<div class="rl" style="top:340px;left:632px;width:78px"></div>
<div class="rl" style="top:340px;left:712px;width:98px"></div>
<div class="rl" style="top:340px;left:812px;width:98px"></div>
<div class="rl" style="top:340px;left:912px;width:98px"></div>
<div class="rl" style="top:340px;left:1012px;width:98px"></div>
<div class="rl" style="top:340px;left:1112px;width:130px"></div>
<div class="rl" style="top:340px;left:1244px;width:78px"></div>
<div class="rl" style="top:340px;left:1324px;width:98px"></div>
<div class="rl" style="top:340px;left:1424px;width:98px"></div>
<div class="rl" style="top:340px;left:1524px;width:166px"></div>
<div class="rl" style="top:340px;left:1692px;width:38px"></div>
<div class="td c " style="left:21px;top:343px;width:49px;height:29px"><span>10</span></div>
<div class="td l " style="left:70px;top:343px;width:160px;height:29px"><span>PPR内丝弯头</span></div>
<div class="td l " style="left:230px;top:343px;width:100px;height:29px"><span>25*15</span></div>
<div class="td l " style="left:330px;top:343px;width:100px;height:29px"><span>个</span></div>
<div class="td c " style="left:430px;top:343px;width:100px;height:29px"><span>2023-01-...</span></div>
<div class="td r u " style="left:530px;top:343px;width:100px;height:29px"><span>1.00</span></div>
<div class="td c " style="left:630px;top:343px;width:80px;height:29px"><span>0.00000</span></div>
<div class="td r u " style="left:710px;top:343px;width:100px;height:29px"><span>1.00</span></div>
<div class="td r u " style="left:810px;top:343px;width:100px;height:29px"><span>0.00</span></div>
<div class="td r u " style="left:910px;top:343px;width:100px;height:29px"><span>0.00</span></div>
<div class="td r " style="left:1010px;top:343px;width:100px;height:29px"><span>0.00</span></div>
<div class="td r " style="left:1110px;top:343px;width:132px;height:29px"><span>0.00</span></div>
<div class="td c " style="left:1242px;top:343px;width:80px;height:29px"><span></span></div>
<div class="td r " style="left:1322px;top:343px;width:100px;height:29px"><span></span></div>
<div class="td r " style="left:1422px;top:343px;width:100px;height:29px"><span>0.00</span></div>
<div class="td r " style="left:1522px;top:343px;width:168px;height:29px;padding-right:13px"><span>0.00</span></div>
<div class="td l " style="left:1690px;top:343px;width:40px;height:29px"><span></span></div>
<div class="rl" style="top:372px;left:22px;width:1700px;background:#efefef"></div>
<div class="rl" style="top:372px;left:23px;width:47px"></div>
<div class="rl" style="top:372px;left:72px;width:158px"></div>
<div class="rl" style="top:372px;left:232px;width:98px"></div>
<div class="rl" style="top:372px;left:332px;width:98px"></div>
<div class="rl" style="top:372px;left:432px;width:98px"></div>
<div class="rl" style="top:372px;left:532px;width:98px"></div>
<div class="rl" style="top:372px;left:632px;width:78px"></div>
<div class="rl" style="top:372px;left:712px;width:98px"></div>
<div class="rl" style="top:372px;left:812px;width:98px"></div>
<div class="rl" style="top:372px;left:912px;width:98px"></div>
<div class="rl" style="top:372px;left:1012px;width:98px"></div>
<div class="rl" style="top:372px;left:1112px;width:130px"></div>
<div class="rl" style="top:372px;left:1244px;width:78px"></div>
<div class="rl" style="top:372px;left:1324px;width:98px"></div>
<div class="rl" style="top:372px;left:1424px;width:98px"></div>
<div class="rl" style="top:372px;left:1524px;width:166px"></div>
<div class="rl" style="top:372px;left:1692px;width:38px"></div>
<div class="td c " style="left:21px;top:375px;width:49px;height:29px"><span>11</span></div>
<div class="td l " style="left:70px;top:375px;width:160px;height:29px"><span>胶水</span></div>
<div class="td l " style="left:230px;top:375px;width:100px;height:29px"><span>20ml</span></div>
<div class="td l " style="left:330px;top:375px;width:100px;height:29px"><span>瓶</span></div>
<div class="td c " style="left:430px;top:375px;width:100px;height:29px"><span>2023-02-...</span></div>
<div class="td r u " style="left:530px;top:375px;width:100px;height:29px"><span>1.00</span></div>
<div class="td c " style="left:630px;top:375px;width:80px;height:29px"><span>20.00...</span></div>
<div class="td r u " style="left:710px;top:375px;width:100px;height:29px"><span>5.00</span></div>
<div class="td r u " style="left:810px;top:375px;width:100px;height:29px"><span>100.00</span></div>
<div class="td r u " style="left:910px;top:375px;width:100px;height:29px"><span>100.00</span></div>
<div class="td r " style="left:1010px;top:375px;width:100px;height:29px"><span>10.00</span></div>
<div class="td r " style="left:1110px;top:375px;width:132px;height:29px"><span>90.00</span></div>
<div class="td c " style="left:1242px;top:375px;width:80px;height:29px"><span>90.00%</span></div>
<div class="td r " style="left:1322px;top:375px;width:100px;height:29px"><span></span></div>
<div class="td r " style="left:1422px;top:375px;width:100px;height:29px"><span>0.00</span></div>
<div class="td r " style="left:1522px;top:375px;width:168px;height:29px;padding-right:13px"><span>90.00</span></div>
<div class="td l " style="left:1690px;top:375px;width:40px;height:29px"><span></span></div>
<div class="rl" style="top:404px;left:22px;width:1700px;background:#efefef"></div>
<div class="rl" style="top:404px;left:23px;width:47px"></div>
<div class="rl" style="top:404px;left:72px;width:158px"></div>
<div class="rl" style="top:404px;left:232px;width:98px"></div>
<div class="rl" style="top:404px;left:332px;width:98px"></div>
<div class="rl" style="top:404px;left:432px;width:98px"></div>
<div class="rl" style="top:404px;left:532px;width:98px"></div>
<div class="rl" style="top:404px;left:632px;width:78px"></div>
<div class="rl" style="top:404px;left:712px;width:98px"></div>
<div class="rl" style="top:404px;left:812px;width:98px"></div>
<div class="rl" style="top:404px;left:912px;width:98px"></div>
<div class="rl" style="top:404px;left:1012px;width:98px"></div>
<div class="rl" style="top:404px;left:1112px;width:130px"></div>
<div class="rl" style="top:404px;left:1244px;width:78px"></div>
<div class="rl" style="top:404px;left:1324px;width:98px"></div>
<div class="rl" style="top:404px;left:1424px;width:98px"></div>
<div class="rl" style="top:404px;left:1524px;width:166px"></div>
<div class="rl" style="top:404px;left:1692px;width:38px"></div>
<div class="td c " style="left:21px;top:407px;width:49px;height:29px"><span>12</span></div>
<div class="td l " style="left:70px;top:407px;width:160px;height:29px"><span>雪地靴</span></div>
<div class="td l " style="left:230px;top:407px;width:100px;height:29px"><span></span></div>
<div class="td l " style="left:330px;top:407px;width:100px;height:29px"><span>双</span></div>
<div class="td c " style="left:430px;top:407px;width:100px;height:29px"><span>2023-02-...</span></div>
<div class="td r u " style="left:530px;top:407px;width:100px;height:29px"><span>2.00</span></div>
<div class="td c " style="left:630px;top:407px;width:80px;height:29px"><span>120.0...</span></div>
<div class="td r u " style="left:710px;top:407px;width:100px;height:29px"><span>2.00</span></div>
<div class="td r u " style="left:810px;top:407px;width:100px;height:29px"><span>240.00</span></div>
<div class="td r u " style="left:910px;top:407px;width:100px;height:29px"><span>240.00</span></div>
<div class="td r " style="left:1010px;top:407px;width:100px;height:29px"><span>100.00</span></div>
<div class="td r " style="left:1110px;top:407px;width:132px;height:29px"><span>140.00</span></div>
<div class="td c " style="left:1242px;top:407px;width:80px;height:29px"><span>58.33%</span></div>
<div class="td r " style="left:1322px;top:407px;width:100px;height:29px"><span></span></div>
<div class="td r " style="left:1422px;top:407px;width:100px;height:29px"><span>0.00</span></div>
<div class="td r " style="left:1522px;top:407px;width:168px;height:29px;padding-right:13px"><span>140.00</span></div>
<div class="td l " style="left:1690px;top:407px;width:40px;height:29px"><span></span></div>
<div class="rl" style="top:436px;left:22px;width:1700px;background:#efefef"></div>
<div class="rl" style="top:436px;left:23px;width:47px"></div>
<div class="rl" style="top:436px;left:72px;width:158px"></div>
<div class="rl" style="top:436px;left:232px;width:98px"></div>
<div class="rl" style="top:436px;left:332px;width:98px"></div>
<div class="rl" style="top:436px;left:432px;width:98px"></div>
<div class="rl" style="top:436px;left:532px;width:98px"></div>
<div class="rl" style="top:436px;left:632px;width:78px"></div>
<div class="rl" style="top:436px;left:712px;width:98px"></div>
<div class="rl" style="top:436px;left:812px;width:98px"></div>
<div class="rl" style="top:436px;left:912px;width:98px"></div>
<div class="rl" style="top:436px;left:1012px;width:98px"></div>
<div class="rl" style="top:436px;left:1112px;width:130px"></div>
<div class="rl" style="top:436px;left:1244px;width:78px"></div>
<div class="rl" style="top:436px;left:1324px;width:98px"></div>
<div class="rl" style="top:436px;left:1424px;width:98px"></div>
<div class="rl" style="top:436px;left:1524px;width:166px"></div>
<div class="rl" style="top:436px;left:1692px;width:38px"></div>
<div class="td c " style="left:21px;top:439px;width:49px;height:29px"><span>13</span></div>
<div class="td l " style="left:70px;top:439px;width:160px;height:29px"><span>运费</span></div>
<div class="td l " style="left:230px;top:439px;width:100px;height:29px"><span></span></div>
<div class="td l " style="left:330px;top:439px;width:100px;height:29px"><span>个</span></div>
<div class="td c " style="left:430px;top:439px;width:100px;height:29px"><span>2023-02-...</span></div>
<div class="td r u " style="left:530px;top:439px;width:100px;height:29px"><span>2.00</span></div>
<div class="td c " style="left:630px;top:439px;width:80px;height:29px"><span>10.00...</span></div>
<div class="td r u " style="left:710px;top:439px;width:100px;height:29px"><span>2.00</span></div>
<div class="td r u " style="left:810px;top:439px;width:100px;height:29px"><span>20.00</span></div>
<div class="td r u " style="left:910px;top:439px;width:100px;height:29px"><span>20.00</span></div>
<div class="td r " style="left:1010px;top:439px;width:100px;height:29px"><span>0.00</span></div>
<div class="td r " style="left:1110px;top:439px;width:132px;height:29px"><span>20.00</span></div>
<div class="td c " style="left:1242px;top:439px;width:80px;height:29px"><span>100.0...</span></div>
<div class="td r " style="left:1322px;top:439px;width:100px;height:29px"><span></span></div>
<div class="td r " style="left:1422px;top:439px;width:100px;height:29px"><span>0.00</span></div>
<div class="td r " style="left:1522px;top:439px;width:168px;height:29px;padding-right:13px"><span>20.00</span></div>
<div class="td l " style="left:1690px;top:439px;width:40px;height:29px"><span></span></div>
<div class="rl" style="top:468px;left:22px;width:1700px;background:#efefef"></div>
<div class="rl" style="top:468px;left:23px;width:47px"></div>
<div class="rl" style="top:468px;left:72px;width:158px"></div>
<div class="rl" style="top:468px;left:232px;width:98px"></div>
<div class="rl" style="top:468px;left:332px;width:98px"></div>
<div class="rl" style="top:468px;left:432px;width:98px"></div>
<div class="rl" style="top:468px;left:532px;width:98px"></div>
<div class="rl" style="top:468px;left:632px;width:78px"></div>
<div class="rl" style="top:468px;left:712px;width:98px"></div>
<div class="rl" style="top:468px;left:812px;width:98px"></div>
<div class="rl" style="top:468px;left:912px;width:98px"></div>
<div class="rl" style="top:468px;left:1012px;width:98px"></div>
<div class="rl" style="top:468px;left:1112px;width:130px"></div>
<div class="rl" style="top:468px;left:1244px;width:78px"></div>
<div class="rl" style="top:468px;left:1324px;width:98px"></div>
<div class="rl" style="top:468px;left:1424px;width:98px"></div>
<div class="rl" style="top:468px;left:1524px;width:166px"></div>
<div class="rl" style="top:468px;left:1692px;width:38px"></div>
<div class="td c " style="left:21px;top:471px;width:49px;height:29px"><span>14</span></div>
<div class="td l " style="left:70px;top:471px;width:160px;height:29px"><span>设计费</span></div>
<div class="td l " style="left:230px;top:471px;width:100px;height:29px"><span></span></div>
<div class="td l " style="left:330px;top:471px;width:100px;height:29px"><span>平方米</span></div>
<div class="td c " style="left:430px;top:471px;width:100px;height:29px"><span>2023-02-...</span></div>
<div class="td r u " style="left:530px;top:471px;width:100px;height:29px"><span>3.00</span></div>
<div class="td c " style="left:630px;top:471px;width:80px;height:29px"><span>0.00000</span></div>
<div class="td r u " style="left:710px;top:471px;width:100px;height:29px"><span>192.00</span></div>
<div class="td r u " style="left:810px;top:471px;width:100px;height:29px"><span>0.00</span></div>
<div class="td r u " style="left:910px;top:471px;width:100px;height:29px"><span>0.00</span></div>
<div class="td r " style="left:1010px;top:471px;width:100px;height:29px"><span>0.00</span></div>
<div class="td r " style="left:1110px;top:471px;width:132px;height:29px"><span>0.00</span></div>
<div class="td c " style="left:1242px;top:471px;width:80px;height:29px"><span></span></div>
<div class="td r " style="left:1322px;top:471px;width:100px;height:29px"><span></span></div>
<div class="td r " style="left:1422px;top:471px;width:100px;height:29px"><span>0.00</span></div>
<div class="td r " style="left:1522px;top:471px;width:168px;height:29px;padding-right:13px"><span>0.00</span></div>
<div class="td l " style="left:1690px;top:471px;width:40px;height:29px"><span></span></div>
<div class="rl" style="top:500px;left:22px;width:1700px;background:#efefef"></div>
<div class="rl" style="top:500px;left:23px;width:47px"></div>
<div class="rl" style="top:500px;left:72px;width:158px"></div>
<div class="rl" style="top:500px;left:232px;width:98px"></div>
<div class="rl" style="top:500px;left:332px;width:98px"></div>
<div class="rl" style="top:500px;left:432px;width:98px"></div>
<div class="rl" style="top:500px;left:532px;width:98px"></div>
<div class="rl" style="top:500px;left:632px;width:78px"></div>
<div class="rl" style="top:500px;left:712px;width:98px"></div>
<div class="rl" style="top:500px;left:812px;width:98px"></div>
<div class="rl" style="top:500px;left:912px;width:98px"></div>
<div class="rl" style="top:500px;left:1012px;width:98px"></div>
<div class="rl" style="top:500px;left:1112px;width:130px"></div>
<div class="rl" style="top:500px;left:1244px;width:78px"></div>
<div class="rl" style="top:500px;left:1324px;width:98px"></div>
<div class="rl" style="top:500px;left:1424px;width:98px"></div>
<div class="rl" style="top:500px;left:1524px;width:166px"></div>
<div class="rl" style="top:500px;left:1692px;width:38px"></div>
<div class="td c " style="left:21px;top:503px;width:49px;height:29px"><span>15</span></div>
<div class="td l " style="left:70px;top:503px;width:160px;height:29px"><span>吸入用盐酸氨溴索...</span></div>
<div class="td l " style="left:230px;top:503px;width:100px;height:29px"><span>2ml:15mg</span></div>
<div class="td l " style="left:330px;top:503px;width:100px;height:29px"><span>个</span></div>
<div class="td c " style="left:430px;top:503px;width:100px;height:29px"><span>2023-02-...</span></div>
<div class="td r u " style="left:530px;top:503px;width:100px;height:29px"><span>1.00</span></div>
<div class="td c " style="left:630px;top:503px;width:80px;height:29px"><span>36.00...</span></div>
<div class="td r u " style="left:710px;top:503px;width:100px;height:29px"><span>600.00</span></div>
<div class="td r u " style="left:810px;top:503px;width:100px;height:29px"><span>21,600.00</span></div>
<div class="td r u " style="left:910px;top:503px;width:100px;height:29px"><span>21,600.00</span></div>
<div class="td r " style="left:1010px;top:503px;width:100px;height:29px"><span>0.00</span></div>
<div class="td r " style="left:1110px;top:503px;width:132px;height:29px"><span>21,600.00</span></div>
<div class="td c " style="left:1242px;top:503px;width:80px;height:29px"><span>100.0...</span></div>
<div class="td r " style="left:1322px;top:503px;width:100px;height:29px"><span></span></div>
<div class="td r " style="left:1422px;top:503px;width:100px;height:29px"><span>0.00</span></div>
<div class="td r " style="left:1522px;top:503px;width:168px;height:29px;padding-right:13px"><span>21,600.00</span></div>
<div class="td l " style="left:1690px;top:503px;width:40px;height:29px"><span></span></div>
<div class="rl" style="top:532px;left:22px;width:1700px;background:#efefef"></div>
<div class="rl" style="top:532px;left:23px;width:47px"></div>
<div class="rl" style="top:532px;left:72px;width:158px"></div>
<div class="rl" style="top:532px;left:232px;width:98px"></div>
<div class="rl" style="top:532px;left:332px;width:98px"></div>
<div class="rl" style="top:532px;left:432px;width:98px"></div>
<div class="rl" style="top:532px;left:532px;width:98px"></div>
<div class="rl" style="top:532px;left:632px;width:78px"></div>
<div class="rl" style="top:532px;left:712px;width:98px"></div>
<div class="rl" style="top:532px;left:812px;width:98px"></div>
<div class="rl" style="top:532px;left:912px;width:98px"></div>
<div class="rl" style="top:532px;left:1012px;width:98px"></div>
<div class="rl" style="top:532px;left:1112px;width:130px"></div>
<div class="rl" style="top:532px;left:1244px;width:78px"></div>
<div class="rl" style="top:532px;left:1324px;width:98px"></div>
<div class="rl" style="top:532px;left:1424px;width:98px"></div>
<div class="rl" style="top:532px;left:1524px;width:166px"></div>
<div class="rl" style="top:532px;left:1692px;width:38px"></div>
<div class="td c " style="left:21px;top:535px;width:49px;height:29px"><span>16</span></div>
<div class="td l " style="left:70px;top:535px;width:160px;height:29px"><span>橘红颗粒</span></div>
<div class="td l " style="left:230px;top:535px;width:100px;height:29px"><span>6g*6袋</span></div>
<div class="td l " style="left:330px;top:535px;width:100px;height:29px"><span>个</span></div>
<div class="td c " style="left:430px;top:535px;width:100px;height:29px"><span>2023-02-...</span></div>
<div class="td r u " style="left:530px;top:535px;width:100px;height:29px"><span>1.00</span></div>
<div class="td c " style="left:630px;top:535px;width:80px;height:29px"><span>30.00...</span></div>
<div class="td r u " style="left:710px;top:535px;width:100px;height:29px"><span>500.00</span></div>
<div class="td r u " style="left:810px;top:535px;width:100px;height:29px"><span>15,000.00</span></div>
<div class="td r u " style="left:910px;top:535px;width:100px;height:29px"><span>15,000.00</span></div>
<div class="td r " style="left:1010px;top:535px;width:100px;height:29px"><span>0.00</span></div>
<div class="td r " style="left:1110px;top:535px;width:132px;height:29px"><span>15,000.00</span></div>
<div class="td c " style="left:1242px;top:535px;width:80px;height:29px"><span>100.0...</span></div>
<div class="td r " style="left:1322px;top:535px;width:100px;height:29px"><span></span></div>
<div class="td r " style="left:1422px;top:535px;width:100px;height:29px"><span>0.00</span></div>
<div class="td r " style="left:1522px;top:535px;width:168px;height:29px;padding-right:13px"><span>15,000.00</span></div>
<div class="td l " style="left:1690px;top:535px;width:40px;height:29px"><span></span></div>
<div class="rl" style="top:564px;left:22px;width:1700px;background:#efefef"></div>
<div class="rl" style="top:564px;left:23px;width:47px"></div>
<div class="rl" style="top:564px;left:72px;width:158px"></div>
<div class="rl" style="top:564px;left:232px;width:98px"></div>
<div class="rl" style="top:564px;left:332px;width:98px"></div>
<div class="rl" style="top:564px;left:432px;width:98px"></div>
<div class="rl" style="top:564px;left:532px;width:98px"></div>
<div class="rl" style="top:564px;left:632px;width:78px"></div>
<div class="rl" style="top:564px;left:712px;width:98px"></div>
<div class="rl" style="top:564px;left:812px;width:98px"></div>
<div class="rl" style="top:564px;left:912px;width:98px"></div>
<div class="rl" style="top:564px;left:1012px;width:98px"></div>
<div class="rl" style="top:564px;left:1112px;width:130px"></div>
<div class="rl" style="top:564px;left:1244px;width:78px"></div>
<div class="rl" style="top:564px;left:1324px;width:98px"></div>
<div class="rl" style="top:564px;left:1424px;width:98px"></div>
<div class="rl" style="top:564px;left:1524px;width:166px"></div>
<div class="rl" style="top:564px;left:1692px;width:38px"></div>
<div class="td c " style="left:21px;top:567px;width:49px;height:29px"><span>17</span></div>
<div class="td l " style="left:70px;top:567px;width:160px;height:29px"><span>橱柜</span></div>
<div class="td l " style="left:230px;top:567px;width:100px;height:29px"><span></span></div>
<div class="td l " style="left:330px;top:567px;width:100px;height:29px"><span>套</span></div>
<div class="td c " style="left:430px;top:567px;width:100px;height:29px"><span>2023-02-...</span></div>
<div class="td r u " style="left:530px;top:567px;width:100px;height:29px"><span>3.00</span></div>
<div class="td c " style="left:630px;top:567px;width:80px;height:29px"><span>31,41...</span></div>
<div class="td r u " style="left:710px;top:567px;width:100px;height:29px"><span>3.00</span></div>
<div class="td r u " style="left:810px;top:567px;width:100px;height:29px"><span>94,252.00</span></div>
<div class="td r u " style="left:910px;top:567px;width:100px;height:29px"><span>94,252.00</span></div>
<div class="td r " style="left:1010px;top:567px;width:100px;height:29px"><span>0.00</span></div>
<div class="td r " style="left:1110px;top:567px;width:132px;height:29px"><span>94,252.00</span></div>
<div class="td c " style="left:1242px;top:567px;width:80px;height:29px"><span>100.0...</span></div>
<div class="td r " style="left:1322px;top:567px;width:100px;height:29px"><span>676.00</span></div>
<div class="td r " style="left:1422px;top:567px;width:100px;height:29px"><span>0.00</span></div>
<div class="td r " style="left:1522px;top:567px;width:168px;height:29px;padding-right:13px"><span>93,576.00</span></div>
<div class="td l " style="left:1690px;top:567px;width:40px;height:29px"><span></span></div>
<div class="rl" style="top:596px;left:22px;width:1700px;background:#efefef"></div>
<div class="rl" style="top:596px;left:23px;width:47px"></div>
<div class="rl" style="top:596px;left:72px;width:158px"></div>
<div class="rl" style="top:596px;left:232px;width:98px"></div>
<div class="rl" style="top:596px;left:332px;width:98px"></div>
<div class="rl" style="top:596px;left:432px;width:98px"></div>
<div class="rl" style="top:596px;left:532px;width:98px"></div>
<div class="rl" style="top:596px;left:632px;width:78px"></div>
<div class="rl" style="top:596px;left:712px;width:98px"></div>
<div class="rl" style="top:596px;left:812px;width:98px"></div>
<div class="rl" style="top:596px;left:912px;width:98px"></div>
<div class="rl" style="top:596px;left:1012px;width:98px"></div>
<div class="rl" style="top:596px;left:1112px;width:130px"></div>
<div class="rl" style="top:596px;left:1244px;width:78px"></div>
<div class="rl" style="top:596px;left:1324px;width:98px"></div>
<div class="rl" style="top:596px;left:1424px;width:98px"></div>
<div class="rl" style="top:596px;left:1524px;width:166px"></div>
<div class="rl" style="top:596px;left:1692px;width:38px"></div>
<div class="foot" style="top:649px"></div>
<div class="td c n" style="left:21px;top:650px;width:49px;height:31px"><span></span></div>
<div class="td l n" style="left:70px;top:650px;width:160px;height:31px"><span>合计</span></div>
<div class="td l b" style="left:230px;top:650px;width:100px;height:31px"><span></span></div>
<div class="td l b" style="left:330px;top:650px;width:100px;height:31px"><span></span></div>
<div class="td c b" style="left:430px;top:650px;width:100px;height:31px"><span></span></div>
<div class="td r b" style="left:530px;top:650px;width:100px;height:31px"><span></span></div>
<div class="td c b" style="left:630px;top:650px;width:80px;height:31px"><span></span></div>
<div class="td r b" style="left:710px;top:650px;width:100px;height:31px"><span>1,488.00</span></div>
<div class="td r b" style="left:810px;top:650px;width:100px;height:31px"><span>148,053....</span></div>
<div class="td r b" style="left:910px;top:650px;width:100px;height:31px"><span>146,859....</span></div>
<div class="td r b" style="left:1010px;top:650px;width:100px;height:31px"><span>725.00</span></div>
<div class="td r b" style="left:1110px;top:650px;width:132px;height:31px"><span>146,134.60</span></div>
<div class="td c b" style="left:1242px;top:650px;width:80px;height:31px"><span></span></div>
<div class="td r b" style="left:1322px;top:650px;width:100px;height:31px"><span>876.00</span></div>
<div class="td r b" style="left:1422px;top:650px;width:100px;height:31px"><span>100.00</span></div>
<div class="td r b" style="left:1522px;top:650px;width:168px;height:31px;padding-right:13px"><span>145,158.60</span></div>
<div class="td l b" style="left:1690px;top:650px;width:40px;height:31px"><span></span></div>
<div class="vs" style="left:70px;top:650px;height:46px"></div>
 <div class="abs" style="left:21px;top:696px;width:1700px;height:1px;background:#e0e0e0"></div>
 <div class="abs" style="left:73px;top:686px;width:1577px;height:9px;border-radius:5px;background:#b0b0b0"></div>
</div>
</body></html>
